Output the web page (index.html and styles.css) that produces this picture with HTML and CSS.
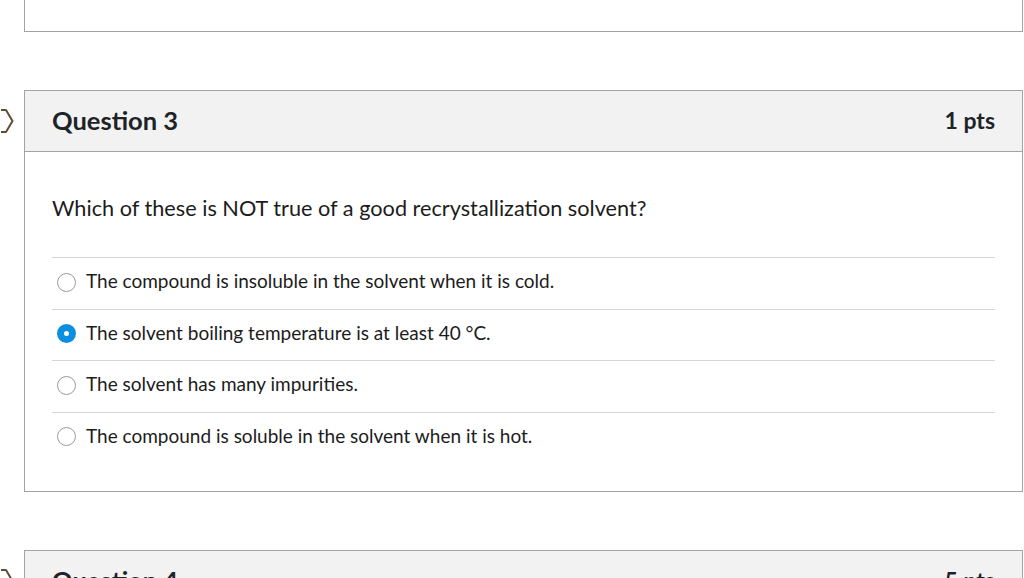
FILE: index.html
```html
<!DOCTYPE html>
<html>
<head>
<meta charset="utf-8">
<link rel="stylesheet" href="styles.css">
</head>
<body>
<div class="page">
  <div class="card card-prev"></div>

  <div class="card">
    <svg class="flag" width="14" height="26" viewBox="0 0 14 26"><path d="M-6 1 L5 1 L11.5 12 L5 23 L-6 23" fill="none" stroke="#5e4e36" stroke-width="2" stroke-linejoin="round"/></svg>
    <div class="card-header">
      <span class="q-title">Question 3</span>
      <span class="q-pts">1 pts</span>
    </div>
    <div class="card-body">
      <p class="q-text">Which of these is NOT true of a good recrystallization solvent?</p>
      <ul class="answers">
        <li class="answer"><span class="radio"></span><span>The compound is insoluble in the solvent when it is cold.</span></li>
        <li class="answer"><span class="radio checked"></span><span>The solvent boiling temperature is at least 40 °C.</span></li>
        <li class="answer"><span class="radio"></span><span>The solvent has many impurities.</span></li>
        <li class="answer"><span class="radio"></span><span>The compound is soluble in the solvent when it is hot.</span></li>
      </ul>
    </div>
  </div>

  <div class="card">
    <svg class="flag" width="14" height="26" viewBox="0 0 14 26"><path d="M-6 1 L5 1 L11.5 12 L5 23 L-6 23" fill="none" stroke="#5e4e36" stroke-width="2" stroke-linejoin="round"/></svg>
    <div class="card-header">
      <span class="q-title">Question 4</span>
      <span class="q-pts">5 pts</span>
    </div>
  </div>
</div>
</body>
</html>
```

FILE: styles.css
```css
html, body {
  margin: 0;
  padding: 0;
  background: #ffffff;
  height: 578px;
  overflow: hidden;
}

body {
  font-family: Lato, "Open Sans", sans-serif;
  color: #1c1c1c;
}

.page {
  padding: 0 1px 0 24px;
  display: flex;
  flex-direction: column;
  gap: 58px;
}

.card {
  position: relative;
  border: 1px solid #a3a3a3;
  background: #fff;
}

.card-prev {
  border-top: none;
  height: 31px;
}

.flag {
  position: absolute;
  left: -24px;
  top: 18px;
}

.card-header {
  height: 61px;
  box-sizing: border-box;
  padding: 0 27px 2px 27px;
  background: #f2f2f2;
  border-bottom: 1px solid #a3a3a3;
  display: flex;
  align-items: center;
  justify-content: space-between;
}

.q-title {
  font-size: 25.5px;
  font-weight: 700;
  color: #1e2328;
}

.q-pts {
  font-size: 23px;
  font-weight: 700;
  color: #1e2328;
}

.card-body {
  padding: 41px 27px 28px 27px;
}

.q-text {
  margin: 0 0 34px 0;
  font-size: 21.7px;
  line-height: 30px;
}

.answers {
  list-style: none;
  margin: 0;
  padding: 0;
}

.answer {
  display: flex;
  align-items: center;
  gap: 10px;
  border-top: 1px solid #d6d6d6;
  padding: 10px 0 14.5px 5px;
  font-size: 19px;
  line-height: 26px;
}

.radio {
  width: 19px;
  height: 19px;
  border: 1px solid #9a9a9a;
  border-radius: 50%;
  box-sizing: border-box;
  flex: none;
  margin-top: 2px;
}

.radio.checked {
  border: 7px solid #0c8fde;
  background: #fff;
}
```
